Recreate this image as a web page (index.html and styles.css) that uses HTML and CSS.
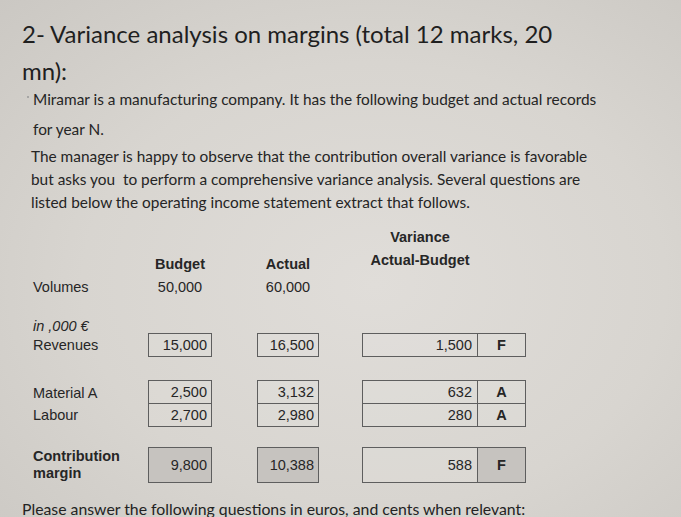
FILE: index.html
```html
<!DOCTYPE html>
<html lang="en">
<head>
<meta charset="utf-8">
<title>Variance analysis on margins</title>
<link rel="stylesheet" href="styles.css">
</head>
<body>
<main class="page">
  <h1 class="title">2- Variance analysis on margins (total 12 marks, 20<br>mn):</h1>

  <p class="para first"><span class="dot"></span>Miramar is a manufacturing company. It has the following budget and actual records<br>for year N.</p>

  <p class="para second">The manager is happy to observe that the contribution overall variance is favorable<br>but asks you&nbsp; to perform a comprehensive variance analysis. Several questions are<br>listed below the operating income statement extract that follows.</p>

  <section class="table">
    <div class="row head">
      <div class="c-label"></div>
      <div class="c-bud h">Budget</div>
      <div class="c-act h">Actual</div>
      <div class="c-var h"><span class="hv">Variance<br>Actual-Budget</span></div>
    </div>

    <div class="row vol">
      <div class="c-label">Volumes</div>
      <div class="c-bud plain">50,000</div>
      <div class="c-act plain">60,000</div>
      <div class="c-var"></div>
    </div>

    <div class="unit">in ,000 €</div>

    <div class="row rev">
      <div class="c-label">Revenues</div>
      <div class="c-bud box"><div class="cell">15,000</div></div>
      <div class="c-act box"><div class="cell">16,500</div></div>
      <div class="c-var box">
        <div class="vrow"><div class="num">1,500</div><div class="flag">F</div></div>
      </div>
    </div>

    <div class="row costs">
      <div class="c-label"><div class="lab">Material A</div><div class="lab">Labour</div></div>
      <div class="c-bud box"><div class="cell">2,500</div><div class="cell">2,700</div></div>
      <div class="c-act box"><div class="cell">3,132</div><div class="cell">2,980</div></div>
      <div class="c-var box">
        <div class="vrow"><div class="num">632</div><div class="flag">A</div></div>
        <div class="vrow"><div class="num">280</div><div class="flag">A</div></div>
      </div>
    </div>

    <div class="row margin">
      <div class="c-label bold">Contribution<br>margin</div>
      <div class="c-bud box shaded"><div class="cell tall">9,800</div></div>
      <div class="c-act box shaded"><div class="cell tall">10,388</div></div>
      <div class="c-var box">
        <div class="vrow tall"><div class="num">588</div><div class="flag shaded">F</div></div>
      </div>
    </div>
  </section>

  <p class="ask">Please answer the following questions in euros, and cents when relevant:</p>
</main>
</body>
</html>
```

FILE: styles.css
```css
html, body {
  margin: 0;
  padding: 0;
}

body {
  width: 681px;
  height: 517px;
  overflow: hidden;
  background: radial-gradient(ellipse at 55% 55%, #e0ddd9 0%, #d8d5d0 55%, #cbc8c3 100%);
  color: #222;
  font-family: "Lato", "Open Sans", sans-serif;
}

.page {
  padding: 15px 0 0 22px;
}

.title {
  margin: 0;
  font-weight: 400;
  font-size: 24px;
  line-height: 37px;
  color: #1f1f1f;
}

.para {
  margin: 0;
  font-size: 15.4px;
  color: #252525;
  position: relative;
}

.para.first {
  margin-top: -5px;
  padding-left: 11px;
  line-height: 30px;
}

.dot {
  position: absolute;
  left: 5px;
  top: 12px;
  width: 2px;
  height: 2px;
  border-radius: 50%;
  background: #999;
}

.para.second {
  margin-top: 1px;
  padding-left: 9px;
  line-height: 23px;
}

.table {
  margin-top: 16px;
  padding-left: 11px;
  font-family: "Liberation Sans", Arial, sans-serif;
  font-size: 14.5px;
  color: #262626;
}

.row {
  display: flex;
  align-items: center;
}

.c-label { width: 115px; }
.c-bud { width: 64px; margin-right: 45px; }
.c-act { width: 62px; margin-right: 43px; }
.c-var { width: 164px; }

.row.head {
  align-items: flex-end;
}

.h {
  font-weight: 700;
  font-size: 14.5px;
  text-align: center;
  line-height: 23px;
}

.hv {
  display: block;
  width: 116px;
  text-align: center;
  position: relative;
  top: -4px;
}

.row.vol {
  height: 22px;
}

.plain {
  text-align: center;
}

.unit {
  margin-top: 20px;
  font-style: italic;
  line-height: 16px;
}

.row.rev { margin-top: -1px; }
.row.costs { margin-top: 23px; }
.row.margin { margin-top: 20px; }

.box {
  border: 1px solid #5e5e5e;
  box-sizing: border-box;
  background: rgba(255, 255, 255, 0.08);
}

.cell {
  height: 22px;
  line-height: 22px;
  text-align: right;
  padding-right: 4px;
}

.cell + .cell,
.vrow + .vrow {
  border-top: 1px solid #5e5e5e;
}

.cell.tall,
.vrow.tall {
  height: 34px;
  line-height: 34px;
}

.vrow {
  display: flex;
  height: 22px;
  line-height: 22px;
}

.num {
  width: 115px;
  text-align: right;
  padding-right: 5px;
  box-sizing: border-box;
  border-right: 1px solid #5e5e5e;
}

.flag {
  flex: 1;
  text-align: center;
  font-weight: 700;
}

.shaded {
  background: #c6c3bf;
}

.lab {
  line-height: 22px;
}

.bold {
  font-weight: 700;
  font-size: 14.5px;
  line-height: 17px;
}

.ask {
  margin: 17px 0 0;
  font-size: 15.8px;
  line-height: 18px;
  color: #232323;
}
```
